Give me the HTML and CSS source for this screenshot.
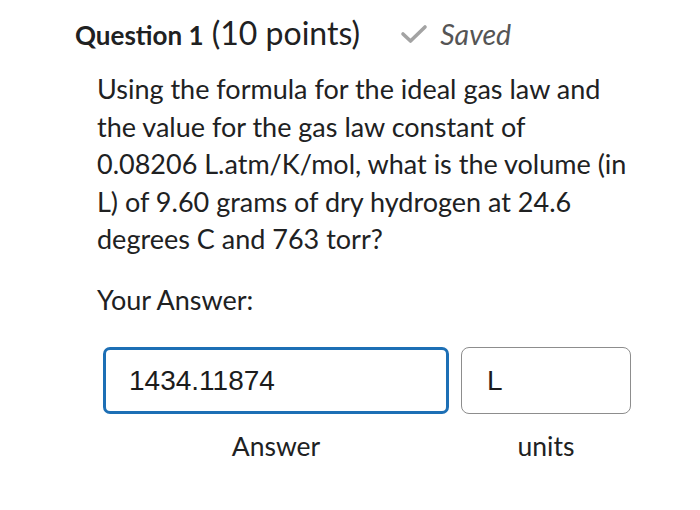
FILE: index.html
```html
<!DOCTYPE html>
<html lang="en">
<head>
    <meta charset="UTF-8">
    <title>Question 1</title>
    <link rel="stylesheet" href="styles.css">
</head>
<body>

<article class="question">
    <header class="question-header">
        <h2><strong>Question 1</strong> <span class="points">(10 points)</span></h2>
        <div class="saved">
            <svg width="28" height="22" viewBox="0 0 28 22">
                <path d="M3 11 L10.5 18 L25 4" fill="none" stroke="#a3a3a3" stroke-width="3.6" stroke-linecap="round" stroke-linejoin="round"/>
            </svg>
            <span>Saved</span>
        </div>
    </header>
    <section class="question-body">
        <p class="prompt">Using the formula for the ideal gas law and the value for the gas law constant of 0.08206 L.atm/K/mol, what is the volume (in L) of 9.60 grams of dry hydrogen at 24.6 degrees C and 763 torr?</p>
        <p class="your-answer">Your Answer:</p>
        <div class="answer-row">
            <div class="field field-answer">
                <div class="box focused">1434.11874</div>
                <label>Answer</label>
            </div>
            <div class="field field-units">
                <div class="box">L</div>
                <label>units</label>
            </div>
        </div>
    </section>
</article>

</body>
</html>
```

FILE: styles.css
```css
body {
    margin: 0;
    padding: 0;
    background-color: #ffffff;
    font-family: Lato, "Open Sans", sans-serif;
    color: #202122;
}

.question {
    width: 700px;
    height: 510px;
    box-sizing: border-box;
    padding: 13px 0 0 75px;
}

.question-header {
    display: flex;
    align-items: center;
}

.question-header h2 {
    margin: 0;
    font-weight: normal;
    font-size: 32px;
    line-height: 40px;
}

.question-header strong {
    font-weight: bold;
    font-size: 26px;
}

.saved {
    display: flex;
    align-items: center;
    margin-left: 40px;
    color: #555555;
    font-style: italic;
    font-size: 28.5px;
}

.saved svg {
    margin-right: 12px;
}

.question-body {
    padding-left: 22px;
}

.prompt {
    margin: 15px 0 0 0;
    width: 531px;
    font-size: 27px;
    line-height: 37.5px;
}

.your-answer {
    margin: 23px 0 0 0;
    font-size: 27px;
    line-height: 37.5px;
}

.answer-row {
    display: flex;
    gap: 12px;
    margin-top: 29px;
    margin-left: 6px;
}

.field {
    display: flex;
    flex-direction: column;
}

.field-answer {
    width: 346px;
}

.field-units {
    width: 170px;
}

.box {
    box-sizing: border-box;
    height: 67px;
    display: flex;
    align-items: center;
    padding-left: 25px;
    font-family: "Liberation Sans", Arial, sans-serif;
    font-size: 28px;
    border: 1.5px solid #8d8d8d;
    border-radius: 8px;
    color: #1c1c1c;
}

.box.focused {
    border: 3px solid #1d6fb5;
    border-radius: 7px;
    padding-left: 23px;
}

.field label {
    text-align: center;
    font-size: 26.5px;
    margin-top: 16px;
}
```
